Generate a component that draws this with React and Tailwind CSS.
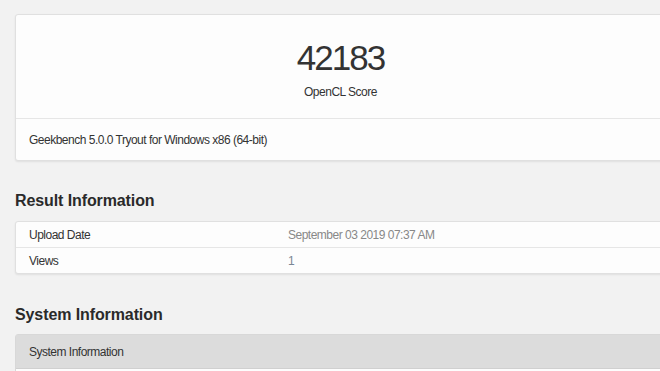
export default function App() {
  return (
    <div className="w-[660px] h-[371px] overflow-hidden bg-[#f2f2f2] text-[#333] font-['Liberation_Sans',Arial,sans-serif]">
      <div className="pl-[15px] pt-[14px] w-[700px]">
        <div className="w-[651px] bg-[#fdfdfd] border border-[#e0e0e0] rounded-[3px] shadow-[0_1px_2px_rgba(0,0,0,0.08)]">
          <div className="h-[104px] flex flex-col items-center border-b border-[#e6e6e6]">
            <div className="mt-[23px] text-[35px] leading-[40px] tracking-[-2px] text-[#333]">42183</div>
            <div className="mt-[7px] text-[12px] leading-[14px] tracking-[-0.5px]">OpenCL Score</div>
          </div>
          <div className="h-[41px] flex items-center pl-[13px] text-[12px] tracking-[-0.5px]">
            Geekbench 5.0.0 Tryout for Windows x86 (64-bit)
          </div>
        </div>

        <h2 className="mt-[30px] text-[16px] leading-[20px] font-bold text-[#2a2a2a] tracking-[-0.1px]">Result Information</h2>
        <div className="mt-[10px] w-[651px] bg-[#fdfdfd] border border-[#e0e0e0] rounded-[3px] shadow-[0_1px_2px_rgba(0,0,0,0.08)] text-[12px] tracking-[-0.5px]">
          <div className="h-[26px] flex items-center border-b border-[#e6e6e6]">
            <div className="pl-[13px] w-[272px]">Upload Date</div>
            <div className="text-[#888]">September 03 2019 07:37 AM</div>
          </div>
          <div className="h-[25px] flex items-center">
            <div className="pl-[13px] w-[272px]">Views</div>
            <div className="text-[#7a8694]">1</div>
          </div>
        </div>

        <h2 className="mt-[31px] text-[16px] leading-[20px] font-bold text-[#2a2a2a] tracking-[-0.1px]">System Information</h2>
        <div className="mt-[9px] w-[651px] bg-[#fdfdfd] border border-[#d8d8d8] rounded-t-[3px] text-[12px] tracking-[-0.5px]">
          <div className="h-[34px] flex items-center pl-[13px] bg-[#dcdcdc] border-b border-[#d0d0d0]">System Information</div>
          <div className="h-[20px]"></div>
        </div>
      </div>
    </div>
  );
}
